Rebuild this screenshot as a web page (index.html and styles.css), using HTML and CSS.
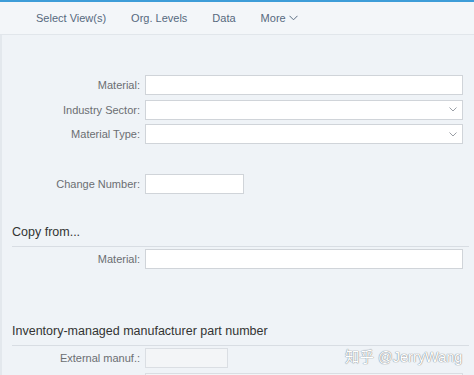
FILE: index.html
```html
<!DOCTYPE html>
<html lang="en">

<head>
    <meta charset="UTF-8">
    <meta name="viewport" content="width=device-width, initial-scale=1.0">
    <title>Create Material</title>
    <link rel="stylesheet" href="styles.css">
</head>

<body>
    <div class="topbar"></div>
    <div class="nav">
        <span class="nav-item">Select View(s)</span>
        <span class="nav-item">Org. Levels</span>
        <span class="nav-item">Data</span>
        <span class="nav-item">More
            <svg class="nav-chev" width="9" height="6" viewBox="0 0 9 6"><polyline points="0.5,0.8 4.5,4.8 8.5,0.8" fill="none" stroke="#5a6d82" stroke-width="1"/></svg>
        </span>
    </div>

    <div class="page">
        <div class="form first">
            <label class="lbl">Material:</label>
            <div class="input"></div>
            <label class="lbl">Industry Sector:</label>
            <div class="input select">
                <svg width="8" height="5" viewBox="0 0 8 5"><polyline points="0.5,0.5 4,4 7.5,0.5" fill="none" stroke="#9a9fa6" stroke-width="1"/></svg>
            </div>
            <label class="lbl">Material Type:</label>
            <div class="input select">
                <svg width="8" height="5" viewBox="0 0 8 5"><polyline points="0.5,0.5 4,4 7.5,0.5" fill="none" stroke="#9a9fa6" stroke-width="1"/></svg>
            </div>
        </div>

        <div class="form change">
            <label class="lbl">Change Number:</label>
            <div class="input short"></div>
        </div>

        <h3 class="section copy">Copy from...</h3>
        <div class="form under">
            <label class="lbl">Material:</label>
            <div class="input"></div>
        </div>

        <h3 class="section inventory">Inventory-managed manufacturer part number</h3>
        <div class="form under">
            <label class="lbl">External manuf.:</label>
            <div class="input disabled tiny"></div>
            <label class="lbl"></label>
            <div class="input disabled"></div>
        </div>
    </div>

    <div class="watermark">知乎 @JerryWang</div>
</body>

</html>
```

FILE: styles.css
```css
body {
    font-family: "Liberation Sans", Arial, sans-serif;
    background-color: #eff3f7;
    margin: 0;
    height: 375px;
    overflow: hidden;
    position: relative;
}

.topbar {
    height: 2px;
    background-color: #3d9dd8;
}

.nav {
    display: flex;
    align-items: center;
    gap: 25px;
    height: 32px;
    padding-left: 36px;
    background-color: #f3f6f9;
    border-bottom: 1px solid #e1e6eb;
    font-size: 11px;
    color: #56697e;
}

.nav-item {
    display: flex;
    align-items: center;
}

.nav-chev {
    margin-left: 3px;
}

.page {
    border-left: 2px solid #e3e8ed;
    height: 340px;
}

.form {
    display: grid;
    grid-template-columns: 138px 1fr;
    column-gap: 5px;
    row-gap: 4.5px;
    padding-right: 11px;
    align-items: center;
}

.first {
    padding-top: 40px;
}

.change {
    margin-top: 30px;
}

.under {
    padding-top: 2px;
}

.lbl {
    font-size: 11px;
    color: #6b6e72;
    text-align: right;
    margin-left: -2px;
}

.input {
    height: 20px;
    box-sizing: border-box;
    background-color: #ffffff;
    border: 1px solid #d0d4d9;
    display: flex;
    align-items: center;
    justify-content: flex-end;
    padding-right: 5px;
}

.short {
    width: 99px;
}

.tiny {
    width: 83px;
}

.disabled {
    background-color: #f3f5f7;
    border-color: #dadee3;
}

.section {
    margin: 0 5px 0 10px;
    padding-bottom: 6px;
    line-height: 16px;
    font-size: 12.5px;
    font-weight: normal;
    color: #333333;
    border-bottom: 1px solid #d8dde3;
}

.copy {
    margin-top: 30px;
}

.inventory {
    margin-top: 54px;
}

.watermark {
    position: absolute;
    left: 345px;
    top: 345px;
    font-size: 14.5px;
    color: #ffffff;
    font-family: "Liberation Sans", "Noto Sans CJK SC", sans-serif;
    text-shadow: 0 0 1px #7d838a, 0 0 1px #7d838a;
}
```
